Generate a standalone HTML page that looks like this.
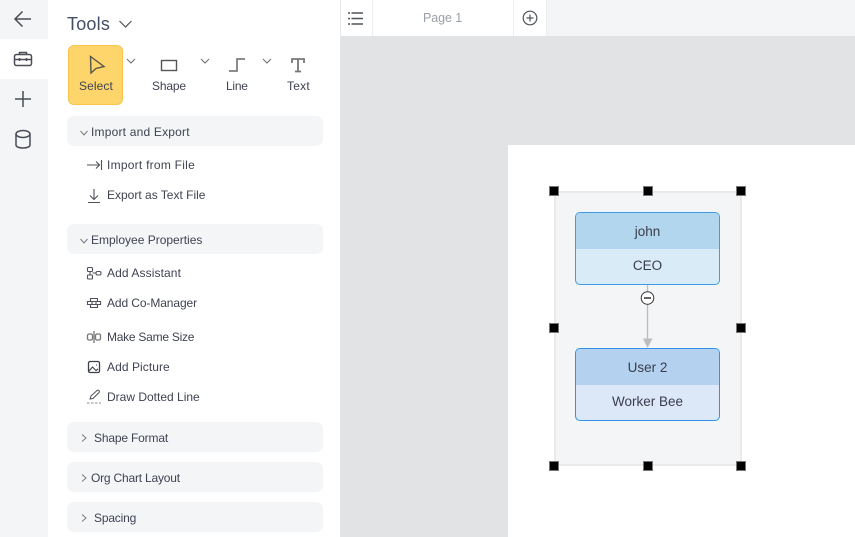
<!DOCTYPE html>
<html><head><meta charset="utf-8">
<style>
html,body{margin:0;padding:0;width:855px;height:537px;overflow:hidden;background:#fff;font-family:"Liberation Sans",sans-serif;color:#3c4151}
.a{position:absolute}
.rail{left:0;top:0;width:48px;height:537px;background:#f4f5f7}
.t{position:absolute;white-space:nowrap;font-size:12px;line-height:16px;color:#3f4352}
.hdr{position:absolute;left:67px;width:256px;height:30px;background:#f4f5f7;border-radius:7px}
svg{position:absolute;overflow:visible}
.h{position:absolute;box-sizing:content-box;width:8px;height:8px;background:#000;border:1px solid #777}
.n{position:absolute;text-align:center;font-size:13.5px;color:#3a3c4a;white-space:nowrap}
</style></head><body>
<div class="a rail"></div>
<div class="a" style="left:0;top:39px;width:48px;height:40px;background:#fff"></div>
<svg style="left:0;top:0" width="48" height="150" fill="none" stroke="#4a4d55" stroke-width="1.5">
<path d="M31 19H15M22.500 11.500L15 19L22.500 26.500"/>
<rect x="14.500" y="54.500" width="17" height="11" rx="2"/><path d="M19.500 54.500V52.500H26.500V54.500M14.500 59.500H31.500M19.500 58V61M26.500 58V61"/>
<path d="M23 91V107M15 99H31"/>
<path d="M16 134V145C16 149 30 149 30 145V134"/><ellipse cx="23" cy="134" rx="7" ry="3.500"/>
</svg>
<div class="t" style="left:67px;top:13px;font-size:18px;line-height:22px;letter-spacing:.2px;color:#454e66">Tools</div>
<svg style="left:119px;top:20px" width="13" height="8" fill="none" stroke="#50535c" stroke-width="1.200"><path d="M.5 1L6.500 7L12.500 1"/></svg>
<div class="a" style="left:68px;top:45px;box-sizing:content-box;background:#fdd56b;border:1px solid #fbc24c;border-radius:6px;width:53px;height:58px"></div>
<svg style="left:88px;top:55px" width="18" height="20" fill="none" stroke="#55534a" stroke-width="1.400"><path d="M2.500 1.500L16 11.500L8 13.500L3 18Z"/></svg>
<div class="t" style="left:79px;top:78px;letter-spacing:.1px">Select</div>
<svg style="left:0;top:0" width="340" height="80" fill="none" stroke="#6a6d73" stroke-width="1">
<path d="M127 59L131 63L135 59M201 59L205 63L209 59M263 59L267 63L271 59"/>
<rect x="161.500" y="60.500" width="15" height="10" stroke-width="1.400" stroke="#555"/>
<path d="M229 71H237V59H245" stroke-width="1.500" stroke="#666"/>
<path d="M292 63V59H304V63M298 59V71.500M295 71.500H301" stroke-width="1.800" stroke="#777"/>
</svg>
<div class="t" style="left:152px;top:78px;letter-spacing:-.15px">Shape</div>
<div class="t" style="left:226px;top:78px;letter-spacing:-.25px">Line</div>
<div class="t" style="left:287px;top:78px;letter-spacing:.25px">Text</div>

<div class="hdr" style="top:116px"></div>
<div class="hdr" style="top:224px"></div>
<div class="hdr" style="top:422px"></div>
<div class="hdr" style="top:462px"></div>
<div class="hdr" style="top:502px"></div>
<svg style="left:0;top:0" width="340" height="537" fill="none" stroke="#777a80" stroke-width="1">
<path d="M80.500 131L84 135L87.500 131M80.500 239L84 243L87.500 239M82 434.500L86 438L82 441.500M82 474.500L86 478L82 481.500M82 514.500L86 518L82 521.500"/>
<g stroke="#4e5159" stroke-width="1.100">
<path d="M87 165H99M96 161.500L99.500 165L96 168.500M101.500 160V170"/>
<path d="M94 189V199M90 195.500L94 199.500L98 195.500M88 202.500H100"/>
<rect x="87.500" y="267.500" width="5" height="4" rx="1"/><rect x="87.500" y="275" width="5" height="4" rx="1"/><rect x="96" y="271.500" width="5" height="3.500" rx="1.500"/><path d="M90 271.500V275M92.500 273H96"/>
<path d="M90.500 301.500V298.500H97.500V301.500M90.500 304.500V307.500H97.500V304.500"/><path d="M87.500 301.500H100.500V304.500H87.500ZM92 301.500V304.500M96 301.500V304.500"/>
</g>
<g stroke="#777" stroke-width="1.300"><rect x="87.500" y="334" width="5" height="6" rx="1.500"/><rect x="95.500" y="334" width="5" height="6" rx="1.500"/><path d="M94 331V343"/></g>
<rect x="88.500" y="361.500" width="11" height="11" rx="1.500" stroke="#3d4048" stroke-width="1.300"/><path d="M89 371L92.500 367L96 370.500L98 369M96 365H97" stroke="#3d4048" stroke-width="1.100"/>
<path d="M90 399L91 396L97 390.500C98.500 389.500 100 391 99 392.500L93 398.500Z" stroke="#4e5159"/><path d="M87 403H101" stroke="#888" stroke-dasharray="2.500 1.500"/>
</svg>
<div class="t" style="left:91px;top:124px;letter-spacing:.2px">Import and Export</div>
<div class="t" style="left:107px;top:157px;letter-spacing:.25px">Import from File</div>
<div class="t" style="left:107px;top:187px">Export as Text File</div>
<div class="t" style="left:91px;top:232px">Employee Properties</div>
<div class="t" style="left:107px;top:265px;letter-spacing:.1px">Add Assistant</div>
<div class="t" style="left:107px;top:295px;letter-spacing:-.1px">Add Co-Manager</div>
<div class="t" style="left:107px;top:329px;letter-spacing:-.25px">Make Same Size</div>
<div class="t" style="left:107px;top:359px;letter-spacing:.07px">Add Picture</div>
<div class="t" style="left:107px;top:389px">Draw Dotted Line</div>
<div class="t" style="left:94px;top:430px;letter-spacing:-.17px">Shape Format</div>
<div class="t" style="left:91px;top:470px;letter-spacing:-.2px">Org Chart Layout</div>
<div class="t" style="left:94px;top:510px;letter-spacing:-.18px">Spacing</div>

<!-- canvas -->
<div class="a" style="left:340px;top:0;width:515px;height:537px;background:#e2e3e5"></div>
<div class="a" style="left:340px;top:0;width:1px;height:537px;background:#e6e7e9"></div>
<div class="a" style="left:341px;top:0;width:514px;height:36px;background:#f4f5f7"></div>
<div class="a" style="left:341px;top:0;width:206px;height:36px;background:#fff"></div>
<div class="a" style="left:372px;top:0;width:1px;height:36px;background:#eceded"></div>
<div class="a" style="left:513px;top:0;width:1px;height:36px;background:#eceded"></div>
<div class="a" style="left:546px;top:0;width:1px;height:36px;background:#eceded"></div>
<svg style="left:341px;top:0" width="210" height="36" fill="none" stroke="#50535c" stroke-width="1.400">
<path d="M7 13H9M7 18.500H9M7 24H9M10.500 13H22M10.500 18.500H22M10.500 24H22"/>
<circle cx="189" cy="18" r="6.800" stroke-width="1.200"/><path d="M189 14.500V21.500M185.500 18H192.500" stroke-width="1.200"/>
</svg>
<div class="t" style="left:423px;top:10px;color:#9a9fa8;font-size:12.500px;letter-spacing:-.08px">Page 1</div>
<div class="a" style="left:508px;top:145px;width:347px;height:392px;background:#fff"></div>

<div class="a" style="left:554px;top:191px;width:188px;height:275px;box-sizing:border-box;background:#f4f5f6;border:2px solid #e9eaec"></div>
<svg style="left:540px;top:280px" width="215" height="75" fill="none">
<path d="M107.500 5V60" stroke="#bdbdbd" stroke-width="1.300"/>
<path d="M103 58.500H112.500L107.500 68Z" fill="#bdbdbd"/>
<circle cx="107.500" cy="18" r="6.300" fill="#fff" stroke="#333" stroke-width="1"/><path d="M104 18H111" stroke="#333" stroke-width="1.500"/>
</svg>
<div class="a" style="left:575px;top:212px;width:145px;height:73px;box-sizing:border-box;border:1px solid #3f9be6;border-radius:5px;overflow:hidden;background:#d9ebf7">
<div style="height:36px;background:#b3d6ef"></div></div>
<div class="n" style="left:575px;width:145px;top:223px;line-height:17px">john</div>
<div class="n" style="left:575px;width:145px;top:257px;line-height:17px">CEO</div>
<div class="a" style="left:575px;top:348px;width:145px;height:73px;box-sizing:border-box;border:1px solid #2f93ea;border-radius:5px;overflow:hidden;background:#dce8f7">
<div style="height:36px;background:#b4d2f0"></div></div>
<div class="n" style="left:575px;width:145px;top:359px;line-height:17px">User 2</div>
<div class="n" style="left:575px;width:145px;top:393px;line-height:17px">Worker Bee</div>

<div class="h" style="left:549px;top:186px"></div>
<div class="h" style="left:642.500px;top:186px"></div>
<div class="h" style="left:736px;top:186px"></div>
<div class="h" style="left:549px;top:323px"></div>
<div class="h" style="left:736px;top:323px"></div>
<div class="h" style="left:549px;top:460.500px"></div>
<div class="h" style="left:642.500px;top:460.500px"></div>
<div class="h" style="left:736px;top:460.500px"></div>
</body></html>
